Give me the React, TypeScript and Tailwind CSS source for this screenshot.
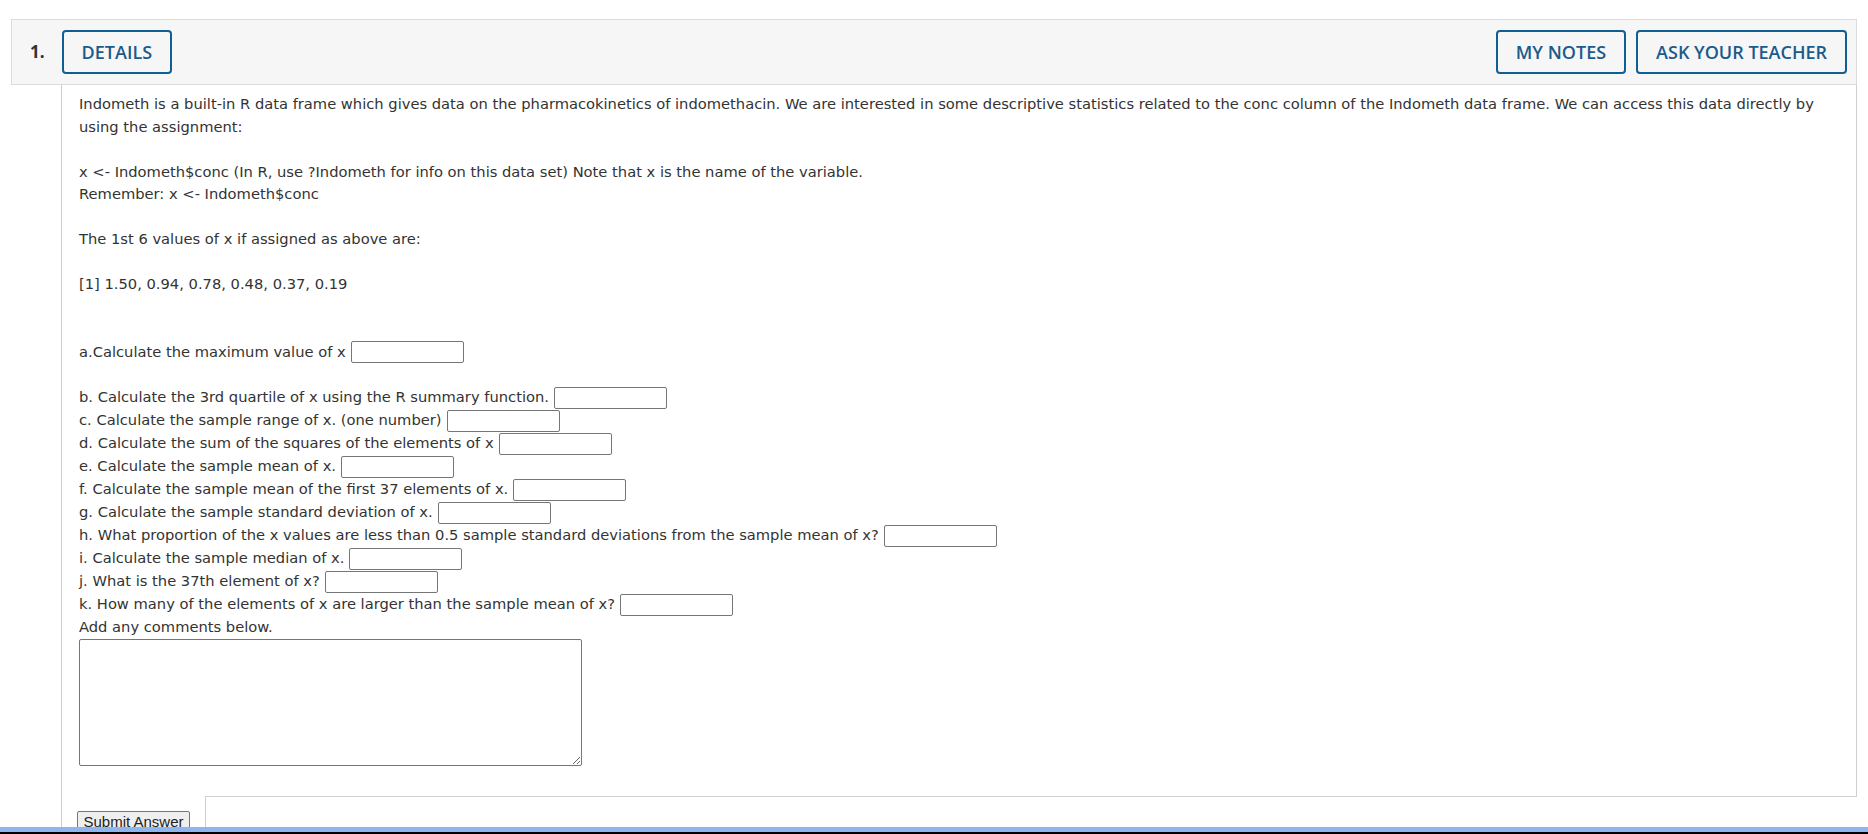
const questions = [
  "b. Calculate the 3rd quartile of x using the R summary function.",
  "c. Calculate the sample range of x. (one number)",
  "d. Calculate the sum of the squares of the elements of x",
  "e. Calculate the sample mean of x.",
  "f. Calculate the sample mean of the first 37 elements of x.",
  "g. Calculate the sample standard deviation of x.",
  "h. What proportion of the x values are less than 0.5 sample standard deviations from the sample mean of x?",
  "i. Calculate the sample median of x.",
  "j. What is the 37th element of x?",
  "k. How many of the elements of x are larger than the sample mean of x?",
];

function HeaderButton({ label }: { label: string }) {
  return (
    <button className="h-[44px] rounded-[4px] border-2 border-[#0f5e94] px-[18px] font-['Open_Sans',sans-serif] text-[18px] font-semibold text-[#1b5b8b]">
      {label}
    </button>
  );
}

function AnswerLine({ text }: { text: string }) {
  return (
    <div className="flex h-[23px] items-center">
      <span>{text}</span>
      <input
        type="text"
        className="ml-[5px] h-[22px] w-[113px] rounded-[2px] border border-[#767676] bg-white"
      />
    </div>
  );
}

export default function App() {
  return (
    <div className="h-screen overflow-hidden bg-white px-[11px] pt-[19px] text-[#333]">
      {/* Question header */}
      <div className="flex items-center border border-[#dcdcdc] bg-[#f6f6f6] py-[10px] pl-[18px] pr-[9px]">
        <span className="mr-[17px] font-['Open_Sans',sans-serif] text-[17px] font-bold text-[#333]">
          1.
        </span>
        <HeaderButton label="DETAILS" />
        <div className="ml-auto flex gap-[10px]">
          <HeaderButton label="MY NOTES" />
          <HeaderButton label="ASK YOUR TEACHER" />
        </div>
      </div>

      {/* Question body */}
      <div className="ml-[50px] border-l border-[#cfcfcf]">
        <div className="border-r border-[#cfcfcf] pb-[30px] pl-[17px] pr-[17px] pt-[8px] font-['DejaVu_Sans',Verdana,sans-serif] text-[14.7px] leading-[22.5px]">
          <p>
            Indometh is a built-in R data frame which gives data on the pharmacokinetics of
            indomethacin. We are interested in some descriptive statistics related to the conc
            column of the Indometh data frame. We can access this data directly by using the
            assignment:
          </p>
          <div className="h-[22.5px]" />
          <p>
            x &lt;- Indometh$conc (In R, use ?Indometh for info on this data set) Note that x is
            the name of the variable.
          </p>
          <p>Remember: x &lt;- Indometh$conc</p>
          <div className="h-[22.5px]" />
          <p>The 1st 6 values of x if assigned as above are:</p>
          <div className="h-[22.5px]" />
          <p>[1] 1.50, 0.94, 0.78, 0.48, 0.37, 0.19</p>
          <div className="h-[45px]" />
          <AnswerLine text="a.Calculate the maximum value of x" />
          <div className="h-[22.5px]" />
          {questions.map((q) => (
            <AnswerLine key={q} text={q} />
          ))}
          <p className="h-[22.5px]">Add any comments below.</p>
          <textarea className="block h-[127px] w-[503px] rounded-[2px] border border-[#767676] bg-white" />
        </div>

        {/* Submit row */}
        <div className="flex h-[38px]">
          <div className="w-[143px] pl-[15px] pt-[13px]">
            <button className="h-[22px] w-[113px] rounded-[2px] border border-[#767676] bg-[#efefef] font-['Liberation_Sans',Arial,sans-serif] text-[15px] leading-[20px] text-[#222]">
              Submit Answer
            </button>
          </div>
          <div className="flex-1 border-l border-t border-[#cfcfcf]" />
        </div>
      </div>

      {/* Screen edge bar */}
      <div className="fixed inset-x-0 bottom-0">
        <div className="h-[5px] bg-[#8db5ee]" />
        <div className="h-[2px] bg-black" />
      </div>
    </div>
  );
}
